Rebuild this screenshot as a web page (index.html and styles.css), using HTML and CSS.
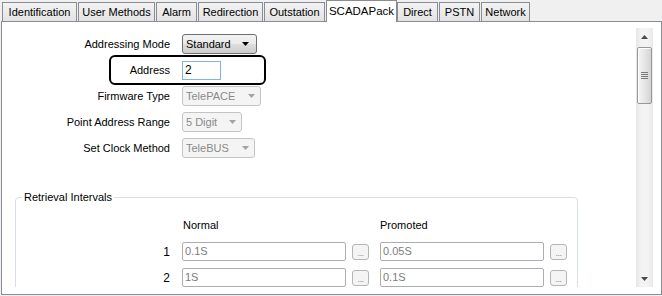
FILE: index.html
```html
<!DOCTYPE html>
<html>
<head>
<meta charset="utf-8">
<link rel="stylesheet" href="styles.css">
</head>
<body>
<div class="window">
  <div class="tabs">
    <div class="tab">Identification</div>
    <div class="tab">User Methods</div>
    <div class="tab">Alarm</div>
    <div class="tab">Redirection</div>
    <div class="tab">Outstation</div>
    <div class="tab active">SCADAPack</div>
    <div class="tab">Direct</div>
    <div class="tab">PSTN</div>
    <div class="tab">Network</div>
  </div>
  <div class="panel">
    <div class="viewport">
      <div class="form">
        <div class="row">
          <span class="label">Addressing Mode</span>
          <div class="combo combo-mode">
            <span class="combo-text">Standard</span>
            <svg class="arrow" width="7" height="4" viewBox="0 0 7 4"><path d="M0 0H7L3.5 4Z" fill="#000"/></svg>
          </div>
        </div>
        <div class="row">
          <span class="label">Address</span>
          <div class="textbox textbox-address">2</div>
          <div class="highlight"></div>
        </div>
        <div class="row">
          <span class="label">Firmware Type</span>
          <div class="combo disabled combo-fw">
            <span class="combo-text">TelePACE</span>
            <svg class="arrow" width="7" height="4" viewBox="0 0 7 4"><path d="M0 0H7L3.5 4Z" fill="#a3a3a3"/></svg>
          </div>
        </div>
        <div class="row">
          <span class="label">Point Address Range</span>
          <div class="combo disabled combo-range">
            <span class="combo-text">5 Digit</span>
            <svg class="arrow" width="7" height="4" viewBox="0 0 7 4"><path d="M0 0H7L3.5 4Z" fill="#a3a3a3"/></svg>
          </div>
        </div>
        <div class="row">
          <span class="label">Set Clock Method</span>
          <div class="combo disabled combo-clock">
            <span class="combo-text">TeleBUS</span>
            <svg class="arrow" width="7" height="4" viewBox="0 0 7 4"><path d="M0 0H7L3.5 4Z" fill="#a3a3a3"/></svg>
          </div>
        </div>
      </div>

      <div class="group">
        <div class="group-title">Retrieval Intervals</div>
        <div class="grid-head">
          <span class="num"></span>
          <span class="head head-normal">Normal</span>
          <span class="head head-promoted">Promoted</span>
        </div>
        <div class="interval-row">
          <span class="num">1</span>
          <div class="field field-normal">0.1S</div>
          <div class="dots dots-normal">...</div>
          <div class="field field-promoted">0.05S</div>
          <div class="dots dots-promoted">...</div>
        </div>
        <div class="interval-row">
          <span class="num">2</span>
          <div class="field field-normal">1S</div>
          <div class="dots dots-normal">...</div>
          <div class="field field-promoted">0.1S</div>
          <div class="dots dots-promoted">...</div>
        </div>
      </div>
    </div>

    <div class="scrollbar">
      <div class="sb-btn">
        <svg width="7" height="4" viewBox="0 0 7 4"><path d="M3.5 0L7 4H0Z" fill="#4a4a4a"/></svg>
      </div>
      <div class="sb-track">
        <div class="sb-thumb">
          <svg width="7" height="8" viewBox="0 0 7 8">
            <rect x="0" y="0" width="7" height="1" fill="#7a7a7a"/>
            <rect x="0" y="2" width="7" height="1" fill="#7a7a7a"/>
            <rect x="0" y="4" width="7" height="1" fill="#7a7a7a"/>
            <rect x="0" y="6" width="7" height="1" fill="#7a7a7a"/>
          </svg>
        </div>
      </div>
      <div class="sb-btn">
        <svg width="7" height="4" viewBox="0 0 7 4"><path d="M0 0H7L3.5 4Z" fill="#4a4a4a"/></svg>
      </div>
    </div>
  </div>
</div>
</body>
</html>
```

FILE: styles.css
```css
* { box-sizing: border-box; }

html, body {
  margin: 0;
  padding: 0;
  background: #f0f0f0;
  width: 662px;
  height: 296px;
  overflow: hidden;
  font-family: "Liberation Sans", Arial, sans-serif;
  font-size: 11px;
  color: #000;
}

.window {
  width: 662px;
  height: 296px;
}

/* ---------- tabs ---------- */
.tabs {
  display: flex;
  align-items: flex-end;
  height: 21px;
  padding-left: 2px;
  position: relative;
  z-index: 2;
}

.tab {
  height: 19px;
  border: 1px solid #898c95;
  border-bottom: none;
  background: linear-gradient(#f3f3f3, #e3e3e3);
  padding-top: 3px;
  text-align: center;
  white-space: nowrap;
  margin-right: 1px;
  line-height: 13px;
}

.tab:nth-child(1) { width: 75px; }
.tab:nth-child(2) { width: 77px; }
.tab:nth-child(3) { width: 41px; }
.tab:nth-child(4) { width: 65px; }
.tab:nth-child(5) { width: 61px; margin-right: 0; }
.tab:nth-child(6) { width: 71px; margin-left: 1px; margin-right: 0; }
.tab:nth-child(7) { width: 41px; margin-right: 1px; }
.tab:nth-child(8) { width: 41px; margin-right: 1px; }
.tab:nth-child(9) { width: 49px; }

.tab.active {
  height: 22px;
  margin-bottom: -1px;
  background: #fff;
  padding-top: 4px;
  font-size: 11.5px;
}

/* ---------- panel ---------- */
.panel {
  margin-left: 1px;
  width: 661px;
  height: 274px;
  border: 1px solid #898c95;
  background: #fff;
  padding: 6px 8px 7px 6px;
  display: flex;
}

.viewport {
  width: 628px;
  height: 259px;
  overflow: hidden;
}

/* ---------- top form ---------- */
.form {
  padding-top: 6px;
  display: flex;
  flex-direction: column;
  gap: 6px;
}

.row {
  display: flex;
  align-items: center;
  height: 20px;
  position: relative;
}

.label {
  width: 162px;
  text-align: right;
  margin-right: 12px;
  white-space: nowrap;
}

.combo {
  height: 20px;
  border: 1px solid #707070;
  border-radius: 3px;
  background: linear-gradient(#f2f2f2 0%, #ebebeb 50%, #dddddd 51%, #cfcfcf 100%);
  display: flex;
  align-items: center;
  padding-left: 3px;
}

.combo-text { flex: 1; }

.combo .arrow { margin-right: 7px; }

.combo-mode { width: 75px; }
.combo-fw { width: 79px; }
.combo-range { width: 60px; }
.combo-clock { width: 73px; }

.combo.disabled {
  border-color: #c4c4c4;
  background: #f4f4f4;
  color: #8a8a8a;
}

.combo.disabled .arrow { margin-right: 5px; }

.textbox {
  height: 19px;
  border: 1px solid #7eb4ea;
  padding-left: 2px;
  line-height: 17px;
  background: #fff;
}

.textbox-address {
  width: 39px;
  font-size: 12px;
}

.highlight {
  position: absolute;
  left: 101px;
  top: -5px;
  width: 157px;
  height: 30px;
  border: 2px solid #000;
  border-radius: 6px;
  pointer-events: none;
}

/* ---------- group ---------- */
.group {
  margin: 39px 0 0 7px;
  width: 563px;
  border: 1px solid #d5dfe5;
  border-radius: 4px;
  padding-bottom: 12px;
}

.group-title {
  display: table;
  margin: -7px 0 0 6px;
  padding: 0 2px;
  background: #fff;
  line-height: 13px;
}

.grid-head {
  display: flex;
  margin-top: 15px;
  line-height: 13px;
  height: 13px;
}

.num {
  width: 154px;
  text-align: right;
  flex: none;
}

.head-normal {
  margin-left: 13px;
  width: 197px;
}

.interval-row {
  display: flex;
  align-items: center;
  height: 19px;
  margin-top: 10px;
}

.interval-row + .interval-row { margin-top: 7px; }

.interval-row .num { font-size: 12px; }

.field {
  height: 19px;
  border: 1px solid #abadb3;
  border-radius: 2px;
  color: #7c7c7c;
  padding-left: 2px;
  line-height: 17px;
  background: #fff;
}

.field-normal { width: 164px; margin-left: 12px; }
.field-promoted { width: 164px; margin-left: 11px; }

.dots {
  width: 17px;
  height: 16px;
  border: 1px solid #b5b5b5;
  border-radius: 3px;
  background: #f4f4f4;
  color: #8a8a8a;
  font-size: 9px;
  text-align: center;
  line-height: 17px;
  letter-spacing: -0.5px;
}

.dots-normal { margin-left: 6px; }
.dots-promoted { margin-left: 6px; }

/* ---------- scrollbar ---------- */
.scrollbar {
  width: 17px;
  height: 259px;
  display: flex;
  flex-direction: column;
  background: linear-gradient(90deg, #e6e6e6, #f3f3f3 30%, #f3f3f3 70%, #e9e9e9);
}

.sb-btn {
  height: 17px;
  display: flex;
  align-items: center;
  justify-content: center;
  flex: none;
}

.sb-track {
  flex: 1;
  padding-top: 2px;
}

.sb-thumb {
  margin-left: 1px;
  width: 15px;
  height: 57px;
  border: 1px solid #979797;
  border-radius: 2px;
  background: linear-gradient(90deg, #f4f4f4, #e6e6e6 50%, #d3d3d3);
  box-shadow: inset 1px 1px 0 #fff;
  display: flex;
  align-items: center;
  justify-content: center;
}
```
